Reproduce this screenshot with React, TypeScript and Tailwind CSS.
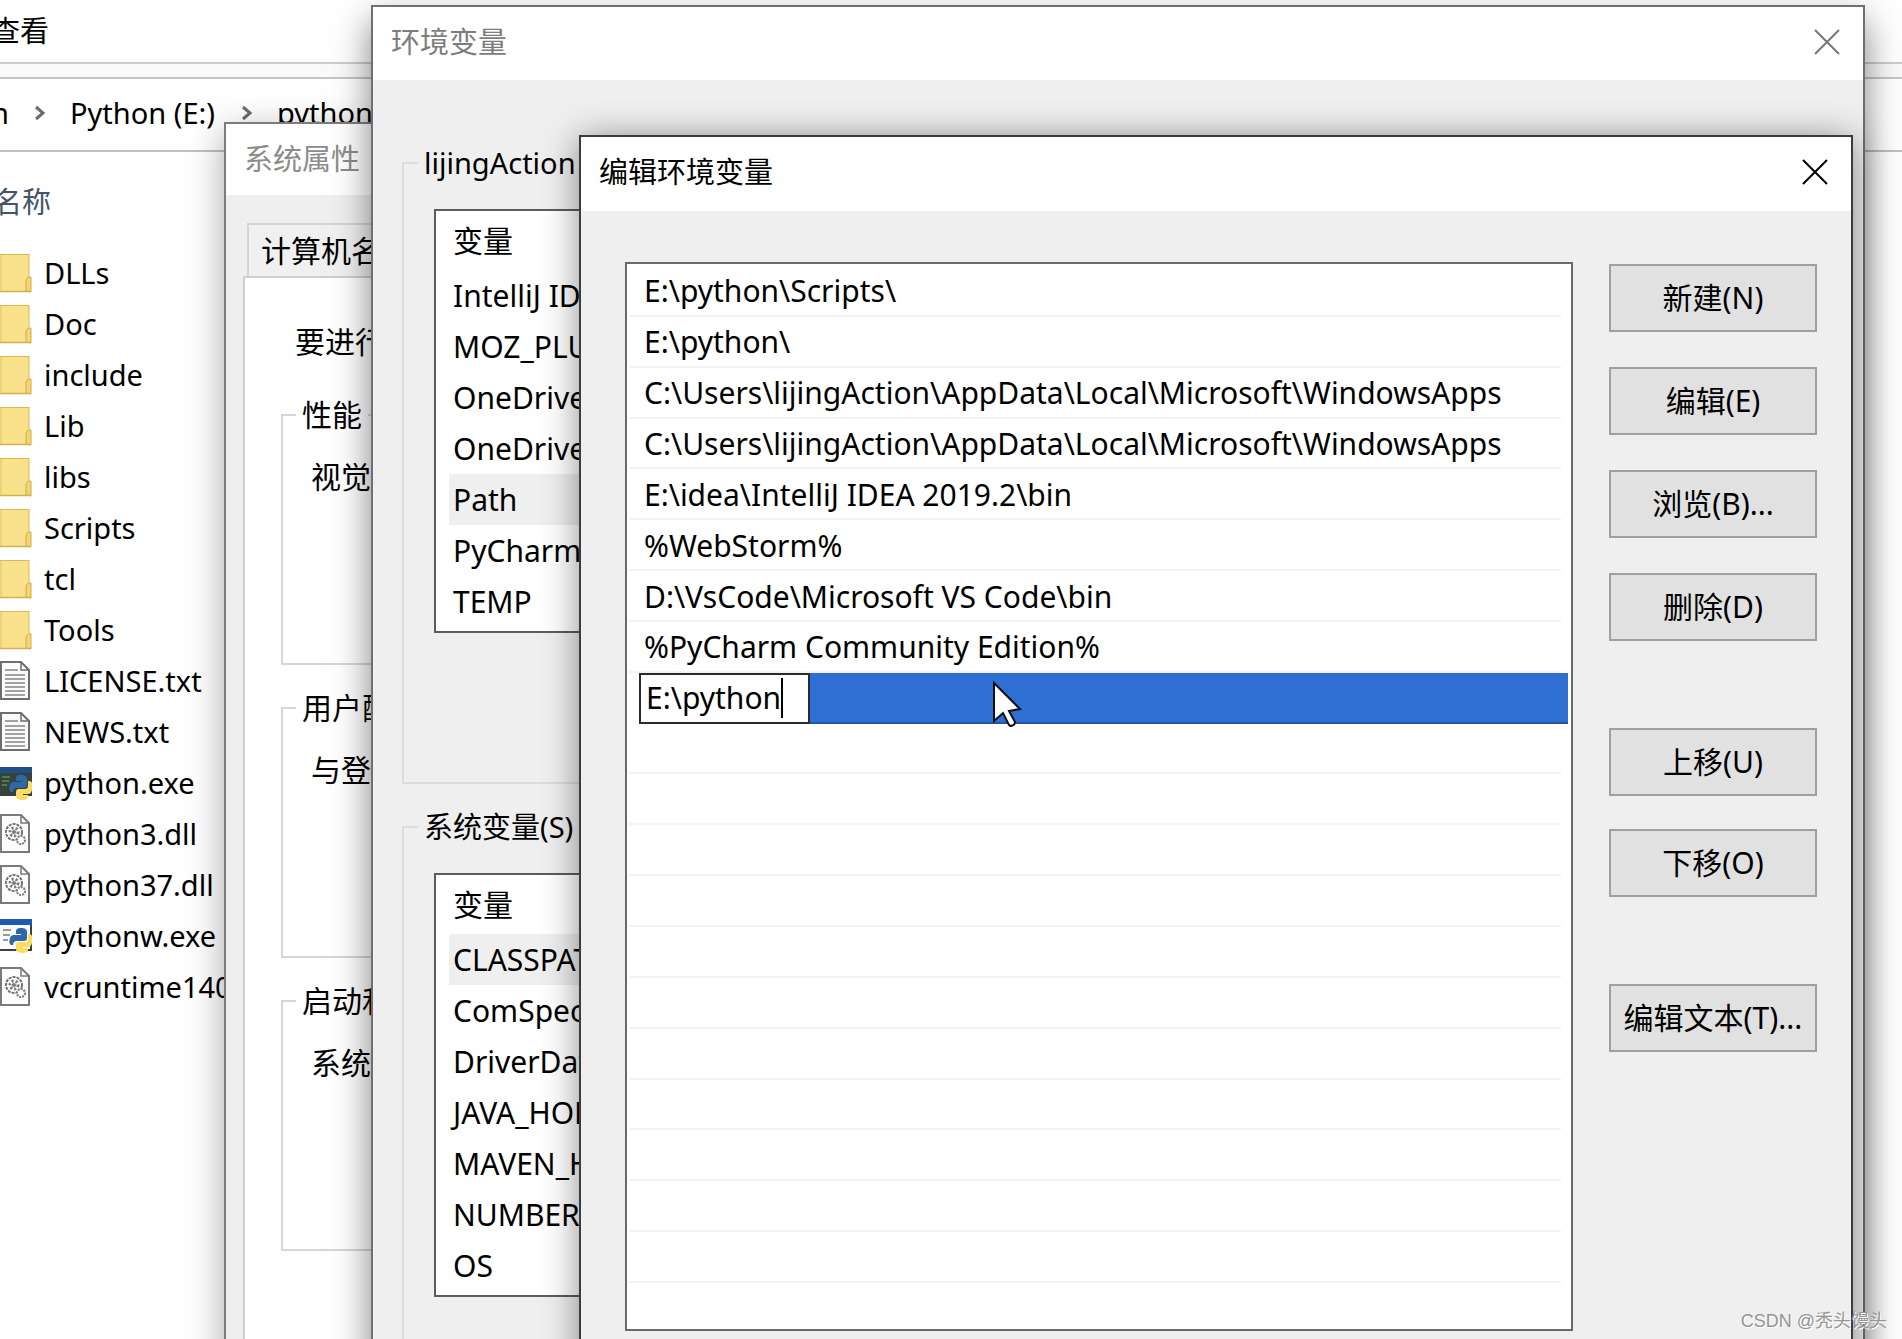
import React, { useState } from 'react';

type FileKind = 'folder' | 'text' | 'console' | 'library' | 'app';

const files: { name: string; kind: FileKind }[] = [
  { name: 'DLLs', kind: 'folder' },
  { name: 'Doc', kind: 'folder' },
  { name: 'include', kind: 'folder' },
  { name: 'Lib', kind: 'folder' },
  { name: 'libs', kind: 'folder' },
  { name: 'Scripts', kind: 'folder' },
  { name: 'tcl', kind: 'folder' },
  { name: 'Tools', kind: 'folder' },
  { name: 'LICENSE.txt', kind: 'text' },
  { name: 'NEWS.txt', kind: 'text' },
  { name: 'python.exe', kind: 'console' },
  { name: 'python3.dll', kind: 'library' },
  { name: 'python37.dll', kind: 'library' },
  { name: 'pythonw.exe', kind: 'app' },
  { name: 'vcruntime140', kind: 'library' },
];

const userVars = ['IntelliJ IDEA', 'MOZ_PLUGIN', 'OneDrive', 'OneDrive', 'Path', 'PyCharm', 'TEMP'];
const systemVars = ['CLASSPATH', 'ComSpec', 'DriverData', 'JAVA_HOME', 'MAVEN_HOME', 'NUMBER_OF', 'OS'];

const paths = [
  'E:\\python\\Scripts\\',
  'E:\\python\\',
  'C:\\Users\\lijingAction\\AppData\\Local\\Microsoft\\WindowsApps',
  'C:\\Users\\lijingAction\\AppData\\Local\\Microsoft\\WindowsApps',
  'E:\\idea\\IntelliJ IDEA 2019.2\\bin',
  '%WebStorm%',
  'D:\\VsCode\\Microsoft VS Code\\bin',
  '%PyCharm Community Edition%',
];
const emptyRows = Array.from({ length: 11 }, (_, i) => i);

const settings = [
  { title: '性能', text: '视觉效' },
  { title: '用户配', text: '与登录' },
  { title: '启动和', text: '系统启' },
];

function PythonMark() {
  return (
    <g>
      <path d="M20 12c3 0 7 0 7 4v6c0 2-1 3-3 3h-7c-3 0-4 2-4 4h-2c-2-1-2-4-1-7s3-3 5-3h6v-1h-5v-3c0-2 2-3 4-3z" fill="#2f69a5" />
      <path d="M28 18h2c3 1 3 6 2 9s-2 4-4 4h-5v1h5v2c0 2-2 3-5 3-4 0-7-1-7-4v-4c0-2 1-3 3-3h6c2 0 3-1 3-4z" fill="#fbdc62" />
    </g>
  );
}

function FileIcon({ kind }: { kind: FileKind }) {
  if (kind === 'folder') {
    return (
      <svg className="w-8 h-10" viewBox="0 0 32 40" aria-hidden="true">
        <path d="M0 1h29v22l2 2v14H0z" fill="#f9e28b" />
        <path d="M0 1.500h29M29 1v22" stroke="#d9b955" fill="none" />
        <path d="M26 38V27l2-3h3v15z" fill="#f3d573" stroke="#cfae4c" />
        <path d="M0 38.500h31" stroke="#d3b14d" strokeWidth="1.500" />
        <path d="M1 2v36" stroke="#e3c565" />
      </svg>
    );
  }
  if (kind === 'text') {
    return (
      <svg className="w-8 h-10" viewBox="0 0 32 40" fill="none" stroke="#6e6e6e" strokeWidth="2" aria-hidden="true">
        <path d="M1 1h20l8 8v29H1z" fill="#fbfbfb" />
        <path d="M21 1v8h8" strokeWidth="1.500" />
        <path d="M5 9h13M5 14h20M5 18h20M5 22h20M5 26h20M5 30h20M5 34h20" stroke="#858585" strokeWidth="1.500" />
      </svg>
    );
  }
  if (kind === 'library') {
    return (
      <svg className="w-8 h-10" viewBox="0 0 32 40" fill="none" stroke="#7a7a7a" strokeWidth="2" aria-hidden="true">
        <path d="M1 1h20l8 8v29H1z" fill="#fdfdfd" />
        <path d="M21 1v8h8" strokeWidth="1.500" />
        <circle cx="14" cy="18" r="8" strokeDasharray="3 1" stroke="#707070" />
        <circle cx="14" cy="18" r="4" strokeDasharray="2 2" strokeWidth="3" />
        <circle cx="14" cy="18" r="1" />
        <circle cx="21" cy="26" r="4" fill="#fdfdfd" strokeDasharray="2 1" />
      </svg>
    );
  }
  if (kind === 'console') {
    return (
      <svg className="w-8 h-10" viewBox="0 0 32 40" aria-hidden="true">
        <path d="M0 4h32v29H0z" fill="#34443d" />
        <path d="M0 4h32v6H0z" fill="#204f84" />
        <path d="M2 14h8M2 18h7M2 22h5" stroke="#5f8c4d" strokeWidth="1.500" />
        <PythonMark />
      </svg>
    );
  }
  return (
    <svg className="w-8 h-10" viewBox="0 0 32 40" aria-hidden="true">
      <path d="M-1 4h32v30H-1z" fill="#fafafa" stroke="#3b4046" strokeWidth="2" />
      <path d="M0 3h32v6H0z" fill="#1d5bb0" />
      <path d="M3 14h8M3 19h7M3 24h5" stroke="#9a9a9a" strokeWidth="2" />
      <PythonMark />
    </svg>
  );
}

function Chevron() {
  return (
    <svg className="w-3 h-5" viewBox="0 0 12 20" fill="none" stroke="#6b6b6b" strokeWidth="3" aria-hidden="true">
      <path d="M2 4l7 6-7 6" />
    </svg>
  );
}

function CloseButton({ muted = false }: { muted?: boolean }) {
  return (
    <button type="button" aria-label="关闭" className={muted ? 'text-[#777777]' : 'text-black'}>
      <svg className="w-[26px] h-[26px]" viewBox="0 0 26 26" fill="none" stroke="currentColor" strokeWidth="2" aria-hidden="true">
        <path d="M1 1l24 24M25 1L1 25" />
      </svg>
    </button>
  );
}

function VariableTable({ rows, selected }: { rows: string[]; selected: string }) {
  return (
    <div className="h-[424px] pl-[13px] bg-white border-2 border-[#5c5c5c] text-[30px] leading-[44px]">
      <table className="w-full text-left">
        <thead>
          <tr>
            <th className="h-[59px] pl-1 font-normal">变量</th>
          </tr>
        </thead>
        <tbody>
          {rows.map((name, i) => (
            <tr key={i} className={name === selected ? 'bg-[#efefef]' : ''}>
              <td className="h-[51px] pl-1">{name}</td>
            </tr>
          ))}
        </tbody>
      </table>
    </div>
  );
}

function DialogButton({ children }: { children: React.ReactNode }) {
  return (
    <button type="button" className="w-full h-[68px] bg-[#e1e1e1] border-2 border-[#a0a0a0] text-[30px] leading-[44px] whitespace-nowrap hover:bg-[#e5f1fb]">
      {children}
    </button>
  );
}

function Explorer() {
  return (
    <div className="text-[29px] leading-[44px]">
      <div className="h-16 flex items-center border-b-2 border-[#cdcdcd]">
        <span className="w-[49px] flex justify-end whitespace-nowrap">查看</span>
      </div>
      <div className="h-[15px] bg-[#fafafa] border-b-2 border-[#c6c6c6]" />
      <nav className="h-[73px] pb-1 flex items-center border-b-2 border-[#c0c0c0]">
        <span className="w-[9px] flex justify-end">n</span>
        <span className="ml-[25px]"><Chevron /></span>
        <span className="ml-6">Python (E:)</span>
        <span className="ml-[26px]"><Chevron /></span>
        <span className="ml-6">python</span>
      </nav>
      <div className="h-[95px] pt-1 flex items-center text-[#44546a]">
        <span className="w-[51px] flex justify-end whitespace-nowrap">名称</span>
      </div>
      <ul>
        {files.map(file => (
          <li key={file.name} className="h-[51px] flex items-center gap-3">
            <FileIcon kind={file.kind} />
            {file.name}
          </li>
        ))}
      </ul>
    </div>
  );
}

function SystemProperties() {
  return (
    <section className="absolute left-[224px] top-[122px] w-1/2 min-h-screen bg-[#efefef] border-2 border-[#7c7c7c] shadow-[0_10px_34px_rgba(0,0,0,0.35)]">
      <header className="h-[71px] pl-[18px] pb-[2px] flex items-center bg-white text-[#8c8c8c] text-[29px] leading-[44px]">系统属性</header>
      <div className="pt-7 pl-[17px] text-[30px] leading-[44px]">
        <button type="button" className="block ml-1 h-[53px] px-3 bg-[#f0f0f0] border-2 border-b-0 border-[#d5d5d5]">计算机名</button>
        <div className="min-h-screen pt-[42px] pl-9 bg-white border-2 border-[#cfcfcf]">
          <p className="ml-[14px] mb-[29px]">要进行</p>
          {settings.map(s => (
            <fieldset key={s.title} className="h-[272px] mb-[21px] border-2 border-[#d6d6d6]">
              <legend className="ml-[13px] px-[6px]">{s.title}</legend>
              <p className="pt-[18px] pl-7">{s.text}</p>
            </fieldset>
          ))}
        </div>
      </div>
    </section>
  );
}

function EnvironmentVariables() {
  return (
    <section className="absolute left-[371px] right-[37px] top-[5px] min-h-screen bg-[#efefef] border-2 border-[#6f6f6f] shadow-[0_16px_34px_rgba(0,0,0,0.5)]">
      <header className="h-[73px] pl-[18px] pr-[23px] pb-[4px] flex items-center justify-between bg-white text-[#7d7d7d] text-[29px] leading-[44px]">
        环境变量
        <CloseButton muted />
      </header>
      <div className="pt-[61px] px-[29px] text-[29px] leading-[44px]">
        <fieldset className="h-[643px] mb-[21px] px-[30px] border-2 border-[#dcdcdc]">
          <legend className="-ml-[16px] px-[6px]">lijingAction</legend>
          <div className="pt-6">
            <VariableTable rows={userVars} selected="Path" />
          </div>
        </fieldset>
        <fieldset className="h-[643px] px-[30px] border-2 border-[#dcdcdc]">
          <legend className="-ml-[16px] px-[6px]">系统变量(S)</legend>
          <div className="pt-6">
            <VariableTable rows={systemVars} selected="CLASSPATH" />
          </div>
        </fieldset>
      </div>
    </section>
  );
}

function EditVariable() {
  const [value, setValue] = useState('E:\\python');

  return (
    <section className="absolute left-[579px] right-[49px] top-[135px] min-h-screen bg-[#efefef] border-2 border-[#3c3c3c] shadow-[0_4px_34px_rgba(0,0,0,0.45)]">
      <header className="h-[74px] pl-[18px] pr-[23px] pb-[4px] flex items-center justify-between bg-white text-[29px] leading-[44px]">
        编辑环境变量
        <CloseButton />
      </header>
      <div className="pt-[51px] pl-11 pr-[34px] flex items-start gap-9">
        <ul className="flex-1 h-[1069px] pt-[2px] pb-[46px] px-[2px] grid grid-rows-[repeat(20,1fr)] bg-white border-2 border-[#6a6a6a] text-[30px] leading-[44px]">
          {paths.map((path, i) => (
            <li key={i} className="mr-2 pt-[2px] pl-[15px] flex items-center border-b-2 border-[#f3f3f3]">{path}</li>
          ))}
          <li className="ml-[10px] mr-px flex bg-[#2f6fd4] border-b-2 border-[#24569f]">
            <div className="w-[171px] -mb-[2px] pl-[5px] flex items-center bg-white border-2 border-[#2b2b2b]">
              <input
                type="text"
                aria-label="编辑环境变量"
                value={value}
                onChange={e => setValue(e.target.value)}
                className="[field-sizing:content] outline-none"
              />
              <span className="w-[2px] h-10 bg-black" />
            </div>
          </li>
          {emptyRows.map(i => (
            <li key={i} className="mr-2 border-b-2 border-[#f3f3f3]" />
          ))}
        </ul>
        <div className="w-[208px] pt-[2px] flex flex-col gap-[87px]">
          <div className="flex flex-col gap-[35px]">
            <DialogButton>新建(N)</DialogButton>
            <DialogButton>编辑(E)</DialogButton>
            <DialogButton>浏览(B)...</DialogButton>
            <DialogButton>删除(D)</DialogButton>
          </div>
          <div className="flex flex-col gap-[33px]">
            <DialogButton>上移(U)</DialogButton>
            <DialogButton>下移(O)</DialogButton>
          </div>
          <DialogButton>编辑文本(T)...</DialogButton>
        </div>
      </div>
    </section>
  );
}

export default function App() {
  return (
    <main className="relative min-h-screen overflow-hidden bg-white text-black font-['Noto_Sans','Noto_Sans_CJK_SC',sans-serif]">
      <Explorer />
      <SystemProperties />
      <EnvironmentVariables />
      <EditVariable />
      <svg className="absolute left-[992px] top-[680px] w-8 h-12" viewBox="0 0 32 48" fill="white" stroke="#111111" strokeWidth="2" aria-hidden="true">
        <path d="M2 3v38l9-8 6 12c2 2 6 0 6-3l-6-11 11-2z" />
      </svg>
      <div className="absolute right-[15px] bottom-1 font-['Liberation_Sans','Noto_Sans_CJK_SC',sans-serif] text-[18px] leading-7 text-[#959595] [text-shadow:1px_1px_0_#ffffff]">CSDN @秃头馒头</div>
    </main>
  );
}
